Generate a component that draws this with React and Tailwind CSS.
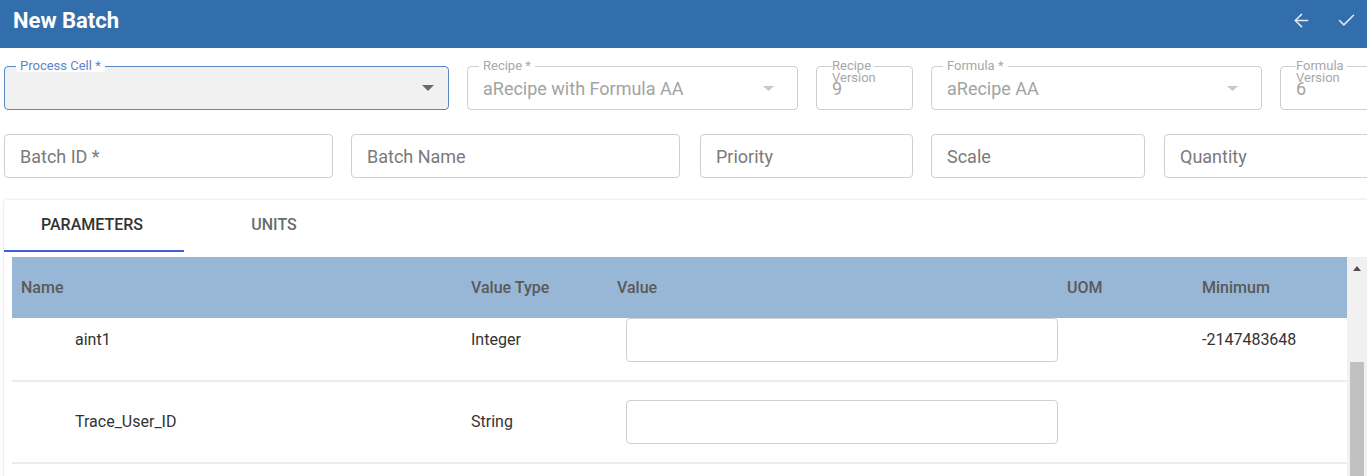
import { ArrowLeft, Check } from 'lucide-react'

const FONT = { fontFamily: 'Roboto, "Liberation Sans", sans-serif' }

const COLUMNS = [
  { id: 'name', label: 'Name' },
  { id: 'type', label: 'Value Type' },
  { id: 'value', label: 'Value' },
  { id: 'uom', label: 'UOM' },
  { id: 'min', label: 'Minimum' },
]

const PARAMS = [
  { name: 'aint1', type: 'Integer', min: '-2147483648' },
  { name: 'Trace_User_ID', type: 'String', min: '' },
]

function Caret({ muted }) {
  return muted ? (
    <svg width="11" height="5" viewBox="0 0 11 5" className="mr-[23px] shrink-0">
      <path d="M0 0h11L5.5 5z" fill="#c8c8c8" />
    </svg>
  ) : (
    <svg width="12" height="6" viewBox="0 0 12 6" className="mr-[14px] shrink-0">
      <path d="M0 0h12L6 6z" fill="#6a6a6a" />
    </svg>
  )
}

// outlined select / field with the label sitting on the top border
function LabeledField({ label, value, width, focused, select, wrapLabel }) {
  return (
    <div
      className={`relative flex h-[44px] shrink-0 items-center rounded-[4px] border pl-[15px] ${
        focused ? 'border-[#5a88c4] bg-[#f1f1f1]' : 'border-[#cfcfcf] bg-white'
      }`}
      style={{ width }}
    >
      <span className="flex-1 truncate pt-[1px] text-[18px] text-[#a3a3a3]">{value}</span>
      {select && <Caret muted={!focused} />}
      <span
        className={`absolute left-[11px] top-[-7px] px-[4px] text-[13px] leading-[12px] ${
          focused ? 'text-[#5a88c4]' : 'text-[#a8a8a8]'
        } ${wrapLabel ? 'w-[60px] bg-transparent' : 'bg-white'}`}
      >
        {wrapLabel ? (
          <>
            <span className="bg-white pr-[3px]">{label[0]}</span>
            <br />
            <span>{label[1]}</span>
          </>
        ) : (
          label
        )}
      </span>
    </div>
  )
}

function PlainField({ placeholder, width, className = '' }) {
  return (
    <div
      className={`flex h-[44px] shrink-0 items-center rounded-[4px] border border-[#cfcfcf] bg-white pl-[15px] text-[18px] text-[#7a7a7a] ${className}`}
      style={{ width }}
    >
      {placeholder}
    </div>
  )
}

export default function App() {
  return (
    <div className="h-[476px] w-[1367px] overflow-hidden bg-white" style={FONT}>
      <header className="flex h-12 items-start justify-between bg-[#336eac] pl-[13px] pr-[10px] pt-[7px]">
        <h1 className="text-[22px] font-bold leading-[28px] text-white">New Batch</h1>
        <div className="flex items-center gap-[24px] pt-[3px] text-[#dfe8f3]">
          <ArrowLeft size={21} strokeWidth={1.8} />
          <Check size={21} strokeWidth={1.8} />
        </div>
      </header>

      <div className="mt-[18px] flex gap-[18px] pl-[4px]">
        <LabeledField label="Process Cell *" width={445} focused select />
        <LabeledField label="Recipe *" value="aRecipe with Formula AA" width={331} select />
        <LabeledField label={['Recipe', 'Version']} value="9" width={97} wrapLabel />
        <LabeledField label="Formula *" value="aRecipe AA" width={331} select />
        <LabeledField label={['Formula', 'Version']} value="6" width={97} wrapLabel />
      </div>

      <div className="mt-[24px] flex pl-[4px]">
        <PlainField placeholder="Batch ID *" width={329} />
        <PlainField placeholder="Batch Name" width={329} className="ml-[18px]" />
        <PlainField placeholder="Priority" width={213} className="ml-[20px]" />
        <PlainField placeholder="Scale" width={214} className="ml-[18px]" />
        <PlainField placeholder="Quantity" width={220} className="ml-[19px]" />
      </div>

      <section className="ml-[3px] mt-[21px] flex h-[300px] flex-col rounded-tl-[4px] border-l border-t border-[#f0f0f0] shadow-[0_-1px_3px_rgba(0,0,0,0.04)]">
        <div className="flex h-[52px] shrink-0">
          <div className="flex w-[180px] flex-col">
            <div className="flex flex-1 items-center justify-center pr-[4px] text-[16px] font-medium text-[#333]">
              PARAMETERS
            </div>
            <div className="h-[2px] bg-[#3f5fd6]" />
          </div>
          <div className="flex w-[180px] items-center justify-center pb-[2px] text-[16px] font-medium text-[#6b6b6b]">
            UNITS
          </div>
        </div>

        <div className="mt-[5px] flex min-h-0 flex-1 pl-[8px]">
          <div className="flex w-[1335px] flex-col">
            <div className="grid h-[61px] shrink-0 grid-cols-[450px_146px_450px_135px_154px] items-center bg-[#98b6d6] text-[16px] font-medium text-[#5a5a5a]">
              {COLUMNS.map(col => (
                <div key={col.id} className="pl-[9px]">{col.label}</div>
              ))}
            </div>
            <div className="min-h-0 flex-1 overflow-hidden">
              <div className="-mt-[18px]">
                {PARAMS.map(p => (
                  <div
                    key={p.name}
                    className="grid h-[82px] grid-cols-[450px_146px_450px_135px_154px] items-center border-b-2 border-[#ececec] text-[16px] text-[#333]"
                  >
                    <div className="pl-[63px]">{p.name}</div>
                    <div className="pl-[9px]">{p.type}</div>
                    <div className="pl-[18px]">
                      <div className="h-[44px] w-[432px] rounded-[4px] border border-[#cfcfcf] bg-white" />
                    </div>
                    <div />
                    <div className="pl-[9px]">{p.min}</div>
                  </div>
                ))}
              </div>
            </div>
          </div>

          <div className="flex w-[20px] shrink-0 flex-col bg-[#f1f1f1]">
            <div className="flex h-[22px] items-center justify-center">
              <svg width="8" height="5" viewBox="0 0 8 5">
                <path d="M0 5L4 0l4 5z" fill="#505050" />
              </svg>
            </div>
            <div className="h-[83px]" />
            <div className="mx-[3px] flex-1 bg-[#c1c1c1]" />
          </div>
        </div>
      </section>
    </div>
  )
}
